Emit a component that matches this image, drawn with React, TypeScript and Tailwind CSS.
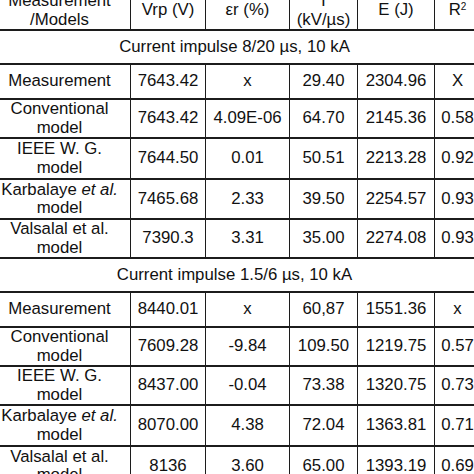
import React from "react";

type Row = {
  model: React.ReactNode;
  vrp: string;
  er: string;
  t: string;
  e: string;
  r2: string;
  h: string;
};

const firstGroup: Row[] = [
  { model: "Measurement", vrp: "7643.42", er: "x", t: "29.40", e: "2304.96", r2: "X", h: "h-[35px]" },
  { model: <>Conventional<br />model</>, vrp: "7643.42", er: "4.09E-06", t: "64.70", e: "2145.36", r2: "0.58", h: "h-[39px]" },
  { model: <>IEEE W. G.<br />model</>, vrp: "7644.50", er: "0.01", t: "50.51", e: "2213.28", r2: "0.92", h: "h-[41px]" },
  { model: <>Karbalaye <i>et al.</i><br />model</>, vrp: "7465.68", er: "2.33", t: "39.50", e: "2254.57", r2: "0.93", h: "h-[40px]" },
  { model: <>Valsalal et al.<br />model</>, vrp: "7390.3", er: "3.31", t: "35.00", e: "2274.08", r2: "0.93", h: "h-[39px]" },
];

const secondGroup: Row[] = [
  { model: "Measurement", vrp: "8440.01", er: "x", t: "60,87", e: "1551.36", r2: "x", h: "h-[35px]" },
  { model: <>Conventional<br />model</>, vrp: "7609.28", er: "-9.84", t: "109.50", e: "1219.75", r2: "0.57", h: "h-[39px]" },
  { model: <>IEEE W. G.<br />model</>, vrp: "8437.00", er: "-0.04", t: "73.38", e: "1320.75", r2: "0.73", h: "h-[39px]" },
  { model: <>Karbalaye <i>et al.</i><br />model</>, vrp: "8070.00", er: "4.38", t: "72.04", e: "1363.81", r2: "0.71", h: "h-[41px]" },
  { model: <>Valsalal et al.<br />model</>, vrp: "8136", er: "3.60", t: "65.00", e: "1393.19", r2: "0.69", h: "h-[40px]" },
];

const cell = "border-x border-y-2 border-[#1c1c1c] text-center align-middle p-0";

const GroupRows = ({ title, rows }: { title: string; rows: Row[] }) => (
  <>
    <tr className="h-[34px]">
      <td colSpan={6} className={cell}>
        {title}
      </td>
    </tr>
    {rows.map((row, i) => (
      <tr key={i} className={row.h}>
        <td className={cell}>{row.model}</td>
        <td className={cell}>{row.vrp}</td>
        <td className={cell}>{row.er}</td>
        <td className={cell}>{row.t}</td>
        <td className={cell}>{row.e}</td>
        <td className={cell}>{row.r2}</td>
      </tr>
    ))}
  </>
);

const App = () => {
  return (
    <div className="w-[474px] h-[474px] overflow-hidden bg-white text-[#111] font-['Liberation_Sans',Arial,sans-serif] text-[16.8px] leading-[18.5px]">
      <table className="table-fixed border-collapse w-[492px] mt-[-10px] ml-[-12px]">
        <colgroup>
          <col className="w-[142px]" />
          <col className="w-[75px]" />
          <col className="w-[84px]" />
          <col className="w-[68px]" />
          <col className="w-[77px]" />
          <col className="w-[46px]" />
        </colgroup>
        <tbody>
          <tr className="h-[38px]">
            <td className={cell}>
              Measurement
              <br />
              /Models
            </td>
            <td className={cell}>Vrp (V)</td>
            <td className={cell}>εr (%)</td>
            <td className={cell}>
              T
              <br />
              (kV/µs)
            </td>
            <td className={cell}>E (J)</td>
            <td className={cell}>
              R<sup className="text-[10px]">2</sup>
            </td>
          </tr>
          <GroupRows title="Current impulse 8/20 µs, 10 kA" rows={firstGroup} />
          <GroupRows title="Current impulse 1.5/6 µs, 10 kA" rows={secondGroup} />
        </tbody>
      </table>
    </div>
  );
};

export default App;
